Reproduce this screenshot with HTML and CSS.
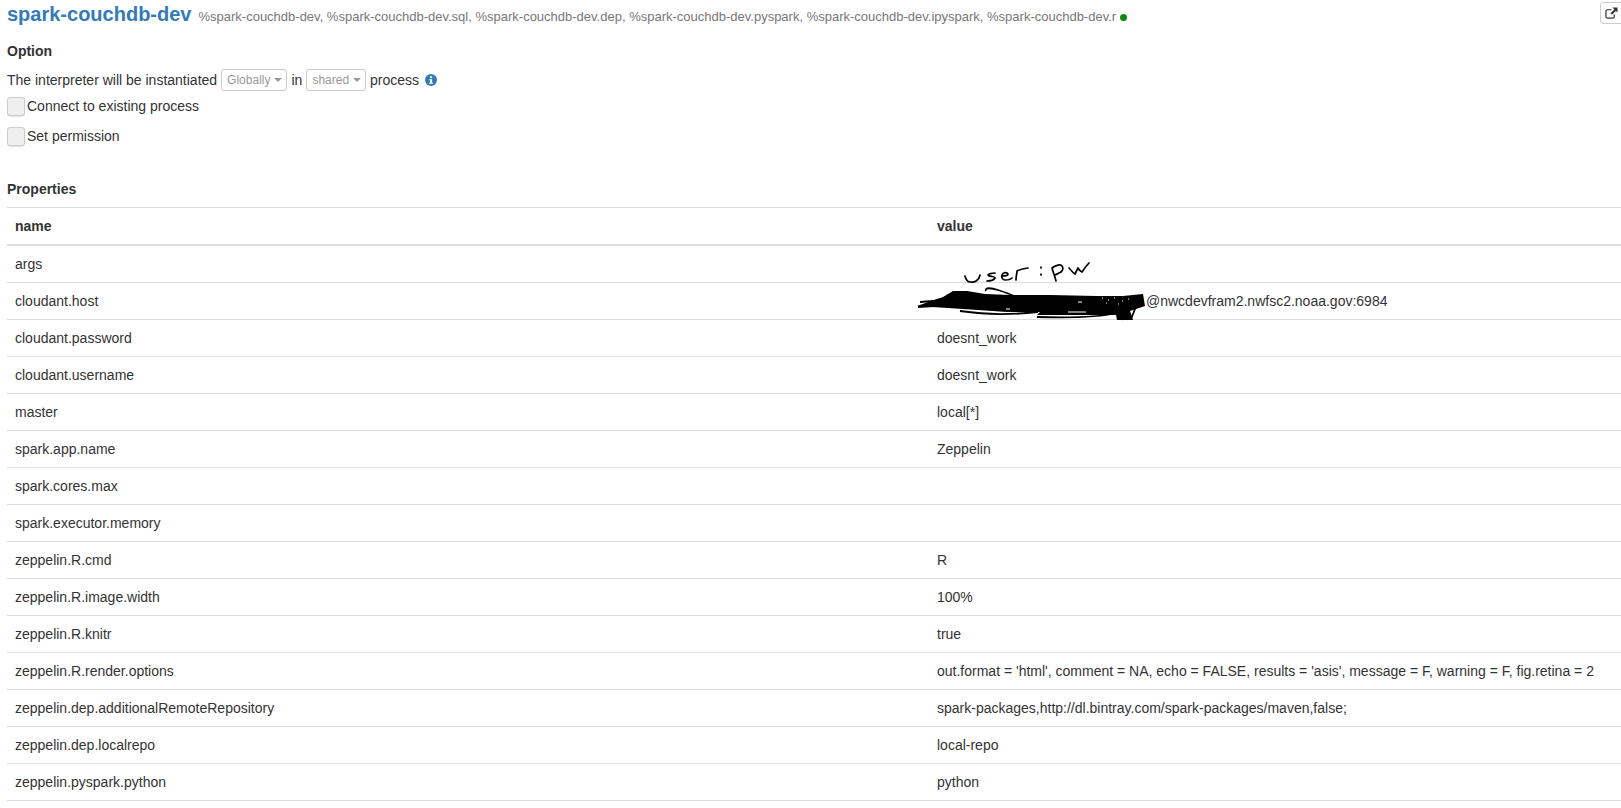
FILE: index.html
```html
<!DOCTYPE html>
<html lang="en">
<head>
<meta charset="utf-8">
<title>spark-couchdb-dev</title>
<link rel="stylesheet" href="styles.css">
</head>
<body>
<header class="head">
  <h3 class="title">spark-couchdb-dev</h3>
  <small class="bindings">%spark-couchdb-dev, %spark-couchdb-dev.sql, %spark-couchdb-dev.dep, %spark-couchdb-dev.pyspark, %spark-couchdb-dev.ipyspark, %spark-couchdb-dev.r</small>
  <span class="dot"></span>
  <button class="open-btn" type="button" aria-label="Open">
    <svg width="13" height="12" viewBox="0 0 14 13"><path d="M10 8v2.500A1.500 1.500 0 0 1 8.500 12H2.500A1.500 1.500 0 0 1 1 10.500V4.500A1.500 1.500 0 0 1 2.500 3H7" fill="none" stroke="#333" stroke-width="1.300"/><path d="M8 0.500h5.500v5.500l-1.800-1.800-4.300 4.300-1.600-1.600 4.300-4.300z" fill="#333"/></svg>
  </button>
</header>
<section class="option">
  <h5 class="section-title">Option</h5>
  <div class="mode">
    <span>The interpreter will be instantiated</span>
    <span class="select">Globally<i class="caret"></i></span>
    <span>in</span>
    <span class="select">shared<i class="caret"></i></span>
    <span>process</span>
    <svg class="info" width="12" height="12" viewBox="0 0 14 14"><circle cx="7" cy="7" r="7" fill="#337ab7"/><rect x="5.800" y="2.500" width="2.500" height="2.300" fill="#fff"/><path d="M4.900 6h3.400v4.200h1v1.300H4.900v-1.300h1V7.300h-1z" fill="#fff"/></svg>
  </div>
  <label class="check first"><span class="box"></span>Connect to existing process</label>
  <label class="check"><span class="box"></span>Set permission</label>
</section>
<section class="properties">
  <h5 class="section-title">Properties</h5>
  <table class="props">
    <thead><tr><th class="name-col">name</th><th>value</th></tr></thead>
    <tbody>
      <tr><td>args</td><td></td></tr>
      <tr><td>cloudant.host</td><td class="host-cell"><span class="host">@nwcdevfram2.nwfsc2.noaa.gov:6984</span>
        <svg class="scribble" width="240" height="70" viewBox="0 0 240 70" aria-hidden="true">
          <path d="M7 48L24 42L33 39L43 33L57 33L75 36L100 37L140 37L187 38L213 38L233 36L235 48L220 53L223 62L207 62L206 57L127 57L130 54L97 54L53 51Z" fill="#000"/>
          <path d="M10 44L36 42M8 49L40 47M50 53C80 57 100 57 128 54M127 59C160 60 190 59 206 55" fill="none" stroke="#000" stroke-width="1.800"/>
          <path d="M76 33C74 29 82 30 88 32C94 34 100 36 104 38" fill="none" stroke="#000" stroke-width="1.800"/>
          <path d="M158 54H176M168 44H172M96 51H100M192 40H193M198 42H199M204 40H205M212 43H213M218 41H219M196 45H197M208 46H209" fill="none" stroke="#fff" stroke-width="1.200"/>
          <path d="M212 62L216 50M221 61L227 46" fill="none" stroke="#000" stroke-width="1.800"/>
          <path d="M55 18C56 22 58 24 60 24C65 25 69 22 70 17M85 15C82 15 78 16 78 17C79 19 85 18 85 20C84 22 80 23 77 23M92 18C94 18 98 18 98 16C97 14 93 14 92 17C91 20 93 22 95 22C98 22 101 21 102 20M106 22C106 18 107 15 107 13C108 12 112 11 118 10M131 9V10M131 16V17M146 23C145 18 143 14 142 10C146 7 151 6 152 8C154 11 152 14 149 15C147 16 146 17 145 17M159 10C161 12 163 15 165 16C166 14 167 12 168 10C169 12 170 13 172 14C174 11 176 8 179 5" fill="none" stroke="#000" stroke-width="1.700" stroke-linecap="round" stroke-linejoin="round"/>
        </svg></td></tr>
      <tr><td>cloudant.password</td><td>doesnt_work</td></tr>
      <tr><td>cloudant.username</td><td>doesnt_work</td></tr>
      <tr><td>master</td><td>local[*]</td></tr>
      <tr><td>spark.app.name</td><td>Zeppelin</td></tr>
      <tr><td>spark.cores.max</td><td></td></tr>
      <tr><td>spark.executor.memory</td><td></td></tr>
      <tr><td>zeppelin.R.cmd</td><td>R</td></tr>
      <tr><td>zeppelin.R.image.width</td><td>100%</td></tr>
      <tr><td>zeppelin.R.knitr</td><td>true</td></tr>
      <tr><td>zeppelin.R.render.options</td><td>out.format = 'html', comment = NA, echo = FALSE, results = 'asis', message = F, warning = F, fig.retina = 2</td></tr>
      <tr><td>zeppelin.dep.additionalRemoteRepository</td><td>spark-packages,http://dl.bintray.com/spark-packages/maven,false;</td></tr>
      <tr><td>zeppelin.dep.localrepo</td><td>local-repo</td></tr>
      <tr><td>zeppelin.pyspark.python</td><td>python</td></tr>
    </tbody>
  </table>
</section>
</body>
</html>
```

FILE: styles.css
```css
* { box-sizing: border-box; }
html, body { height: 808px; overflow: hidden; }
body {
  margin: 0;
  padding: 0 0 0 7px;
  background: #fff;
  color: #333;
  font-family: "Liberation Sans", Arial, sans-serif;
  font-size: 14px;
  line-height: 20px;
}
.head {
  display: flex;
  align-items: baseline;
  height: 26px;
  padding-top: 2px;
}
.title {
  margin: 0;
  font-size: 20px;
  line-height: 24px;
  font-weight: 700;
  color: #337ab7;
}
.bindings {
  margin-left: 7px;
  font-size: 13px;
  color: #777;
  white-space: nowrap;
}
.dot {
  width: 7px;
  height: 7px;
  margin-left: 4px;
  border-radius: 50%;
  background: #0a8a0a;
}
.open-btn {
  position: absolute;
  top: 2px;
  left: 1600px;
  width: 30px;
  height: 22px;
  padding: 0 0 0 4px;
  display: flex;
  align-items: center;
  background: #fff;
  border: 1px solid #ccc;
  border-radius: 3px;
}
.section-title {
  margin: 0;
  font-size: 14px;
  line-height: 16px;
  font-weight: 700;
}
.option { padding-top: 17px; }
.mode {
  display: flex;
  align-items: center;
  gap: 4px;
  height: 22px;
  margin-top: 10px;
}
.select {
  display: inline-flex;
  align-items: center;
  height: 22px;
  padding: 0 4px 0 5px;
  border: 1px solid #ccc;
  border-radius: 3px;
  font-size: 12px;
  color: #999;
}
.caret {
  width: 0;
  height: 0;
  margin-left: 4px;
  border-top: 4px solid #999;
  border-left: 4px solid transparent;
  border-right: 4px solid transparent;
}
.info { margin-left: 2px; }
.check {
  display: flex;
  align-items: center;
  height: 20px;
  margin-top: 10px;
}
.check.first { margin-top: 5px; }
.box {
  width: 18px;
  height: 19px;
  margin-right: 2px;
  border: 1px solid #ccc;
  border-radius: 3px;
  background: #efefef;
  box-shadow: 0 1px 1px rgba(0,0,0,.1);
}
.properties { padding-top: 35px; }
.props {
  width: 1614px;
  margin-top: 10px;
  border-collapse: collapse;
  table-layout: fixed;
}
.name-col { width: 922px; }
.props th, .props td {
  height: 37px;
  padding: 8px;
  text-align: left;
  vertical-align: top;
  border-top: 1px solid #ddd;
  line-height: 20px;
}
.props th { height: 37px; border-bottom: 2px solid #ddd; }
.props td { border-bottom: 1px solid #ddd; white-space: nowrap; }
.host-cell { position: relative; }
.host { margin-left: 209px; }
.scribble {
  position: absolute;
  left: -19px;
  top: -25px;
}
```
